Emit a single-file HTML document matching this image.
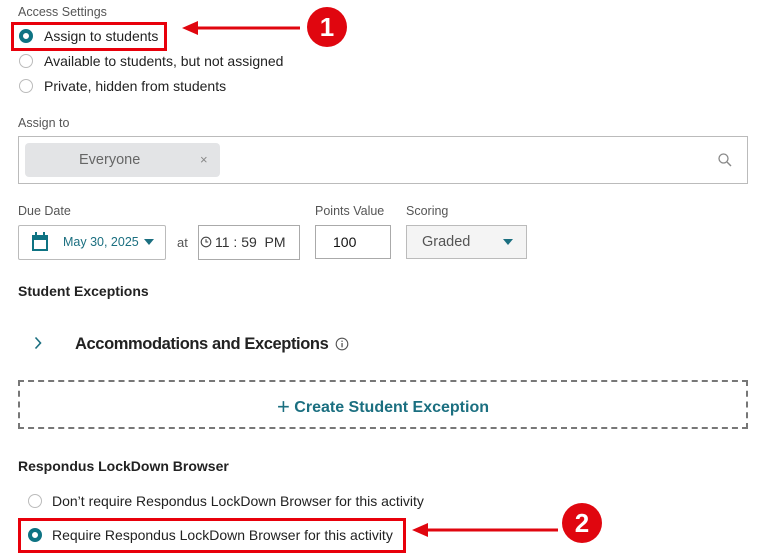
<!DOCTYPE html>
<html><head><meta charset="utf-8"><style>
body{margin:0;width:761px;height:554px;background:#fff;font-family:"Liberation Sans",sans-serif;position:relative;overflow:hidden;color:#222}
.a{position:absolute;white-space:nowrap}
.lbl{font-size:12.5px;color:#555}
.txt{font-size:14px;color:#222}
.rad{position:absolute;width:14px;height:14px;border:1px solid #bbb;border-radius:50%;box-sizing:border-box;background:#fff}
.on{border:4px solid #0e7383;background:#fff}
.box{position:absolute;border:1px solid #bbb;box-sizing:border-box}
.red{position:absolute;border:3px solid #e8000b;box-sizing:border-box}
.circ{position:absolute;width:40px;height:40px;border-radius:50%;background:#e0060f;color:#fff;font-size:26px;font-weight:bold;text-align:center;line-height:40px}
.b{font-weight:bold}
</style></head><body>
<div class="a lbl" style="left:18px;top:5px">Access Settings</div>
<div class="red" style="left:11px;top:22px;width:156px;height:29px"></div>
<div class="rad on" style="left:19px;top:29px"></div>
<div class="a txt" style="left:44px;top:28px">Assign to students</div>
<div class="rad" style="left:19px;top:54px"></div>
<div class="a txt" style="left:44px;top:53px">Available to students, but not assigned</div>
<div class="rad" style="left:19px;top:79px"></div>
<div class="a txt" style="left:44px;top:78px">Private, hidden from students</div>
<svg class="a" style="left:180px;top:20px" width="125" height="16"><line x1="120" y1="8" x2="15" y2="8" stroke="#e0060f" stroke-width="3"/><polygon points="2,8 18,1 18,15" fill="#e0060f"/></svg>
<div class="circ" style="left:307px;top:7px">1</div>

<div class="a lbl" style="left:18px;top:116px">Assign to</div>
<div class="box" style="left:18px;top:136px;width:730px;height:48px"></div>
<div class="a" style="left:25px;top:143px;width:195px;height:34px;background:#e3e4e6;border-radius:4px"></div>
<div class="a" style="left:79px;top:152px;font-size:14.5px;color:#666">Everyone</div>
<div class="a" style="left:200px;top:152px;font-size:13px;color:#888">×</div>
<svg class="a" style="left:717px;top:152px" width="16" height="16"><circle cx="6.5" cy="6.5" r="4.5" fill="none" stroke="#888" stroke-width="1.3"/><line x1="10" y1="10" x2="14" y2="14" stroke="#888" stroke-width="1.4"/></svg>

<div class="a lbl" style="left:18px;top:204px">Due Date</div>
<div class="box" style="left:18px;top:225px;width:148px;height:35px;border-radius:2px"></div>
<svg class="a" style="left:31px;top:232px" width="18" height="20"><rect x="1" y="3" width="16" height="16" fill="#0e7383"/><rect x="3" y="8" width="12" height="9" fill="#fff"/><rect x="4" y="0" width="2" height="4" fill="#0e7383"/><rect x="12" y="0" width="2" height="4" fill="#0e7383"/></svg>
<div class="a" style="left:63px;top:235px;font-size:12.5px;color:#1b6f80">May 30, 2025</div>
<svg class="a" style="left:144px;top:239px" width="10" height="6"><polygon points="0,0 10,0 5,6" fill="#1b6f80"/></svg>
<div class="a" style="left:177px;top:235px;font-size:13px;color:#555">at</div>
<div class="box" style="left:198px;top:225px;width:102px;height:35px;border-color:#aaa"></div>
<svg class="a" style="left:200px;top:236px" width="12" height="12"><circle cx="6" cy="6" r="4.8" fill="none" stroke="#444" stroke-width="1.1"/><path d="M6 3.2V6H8.2" fill="none" stroke="#444" stroke-width="1.1"/></svg>
<div class="a" style="left:215px;top:234px;font-size:14px;color:#333">11 : 59 &nbsp;PM</div>

<div class="a lbl" style="left:315px;top:204px">Points Value</div>
<div class="box" style="left:315px;top:225px;width:76px;height:34px;border-color:#aaa"></div>
<div class="a" style="left:333px;top:234px;font-size:14px;color:#111">100</div>
<div class="a lbl" style="left:406px;top:204px">Scoring</div>
<div class="box" style="left:406px;top:225px;width:121px;height:34px;background:#f4f4f4;border-color:#bbb"></div>
<div class="a" style="left:422px;top:234px;font-size:14.5px;color:#555">Graded</div>
<svg class="a" style="left:503px;top:239px" width="10" height="6"><polygon points="0,0 10,0 5,6" fill="#1b6f80"/></svg>

<div class="a b" style="left:18px;top:283px;font-size:14px">Student Exceptions</div>
<svg class="a" style="left:34px;top:336px" width="8" height="14"><path d="M1.5 1.5 6.5 7 1.5 12.5" fill="none" stroke="#1b6f80" stroke-width="1.6"/></svg>
<div class="a b" style="left:75px;top:335px;font-size:16.5px;color:#222;letter-spacing:-0.4px">Accommodations and Exceptions</div>
<svg class="a" style="left:335px;top:337px" width="14" height="14"><circle cx="7" cy="7" r="5.8" fill="none" stroke="#555" stroke-width="1.1"/><rect x="6.4" y="6" width="1.3" height="4.3" fill="#555"/><rect x="6.4" y="3.6" width="1.3" height="1.3" fill="#555"/></svg>

<div class="a" style="left:18px;top:380px;width:730px;height:49px;border:2px dashed #777;box-sizing:border-box"></div>
<div class="a" style="left:0;top:394px;width:766px;text-align:center;font-size:16px;font-weight:bold;color:#1b6f80"><span style="font-weight:normal;font-size:22px;vertical-align:-2px">+</span> Create Student Exception</div>

<div class="a b" style="left:18px;top:458px;font-size:14px">Respondus LockDown Browser</div>
<div class="rad" style="left:28px;top:494px"></div>
<div class="a" style="left:52px;top:493px;font-size:14px">Don’t require Respondus LockDown Browser for this activity</div>
<div class="red" style="left:18px;top:518px;width:388px;height:35px"></div>
<div class="rad on" style="left:28px;top:528px"></div>
<div class="a" style="left:52px;top:527px;font-size:14px">Require Respondus LockDown Browser for this activity</div>
<svg class="a" style="left:410px;top:522px" width="150" height="16"><line x1="148" y1="8" x2="15" y2="8" stroke="#e0060f" stroke-width="3"/><polygon points="2,8 18,1 18,15" fill="#e0060f"/></svg>
<div class="circ" style="left:562px;top:503px">2</div>
</body></html>
